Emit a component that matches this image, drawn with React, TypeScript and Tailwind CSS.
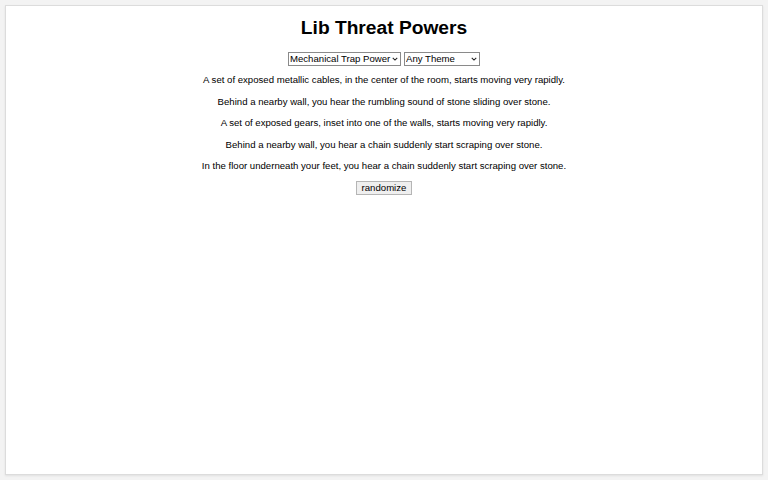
import { useState } from 'react';

const lines = [
  'A set of exposed metallic cables, in the center of the room, starts moving very rapidly.',
  'Behind a nearby wall, you hear the rumbling sound of stone sliding over stone.',
  'A set of exposed gears, inset into one of the walls, starts moving very rapidly.',
  'Behind a nearby wall, you hear a chain suddenly start scraping over stone.',
  'In the floor underneath your feet, you hear a chain suddenly start scraping over stone.',
];

function Picker({
  value,
  onChange,
  options,
  width,
}: {
  value: string;
  onChange: (v: string) => void;
  options: [string, string][];
  width: string;
}) {
  return (
    <div className={`relative h-[14px] ${width}`}>
      <select
        value={value}
        onChange={(e) => onChange(e.target.value)}
        className="block h-[14px] w-full appearance-none border border-[#8a8a8a] bg-white pr-[9px] pl-[1px] text-[9.6px] leading-[12px] text-black"
      >
        {options.map(([v, label]) => (
          <option key={v} value={v}>
            {label}
          </option>
        ))}
      </select>
      <svg
        viewBox="0 0 8 5"
        className="pointer-events-none absolute top-[5px] right-[3px] h-[4px] w-[6px]"
      >
        <path d="M1 1l3 3 3-3" fill="none" stroke="#222" strokeWidth="1.4" />
      </svg>
    </div>
  );
}

export default function App() {
  const [power, setPower] = useState('mechanical');
  const [theme, setTheme] = useState('any');

  return (
    <div className="min-h-[480px] bg-[#f3f3f3] p-[5px] font-['Liberation_Sans',Arial,sans-serif] text-black">
      <div className="h-[470px] border border-[#dcdcdc] bg-white shadow-[0_1px_2px_rgba(0,0,0,0.08)]">
        <h1 className="mt-[11px] text-center text-[19.2px] leading-[22px] font-bold">
          Lib Threat Powers
        </h1>

        {/* power + theme pickers */}
        <div className="mt-[13px] flex items-start justify-center gap-[3px]">
          <Picker
            value={power}
            onChange={setPower}
            width="w-[113px]"
            options={[
              ['mechanical', 'Mechanical Trap Power'],
              ['magical', 'Magical Trap Power'],
            ]}
          />
          <Picker
            value={theme}
            onChange={setTheme}
            width="w-[76px]"
            options={[
              ['any', 'Any Theme'],
              ['dungeon', 'Dungeon'],
            ]}
          />
        </div>

        <div className="mt-[8px] flex flex-col gap-[9.5px] text-center text-[9.6px] leading-[12px]">
          {lines.map((line, i) => (
            <p key={i}>{line}</p>
          ))}
        </div>

        <div className="mt-[9px] flex justify-center">
          <button className="h-[14px] border border-[#b5b5b5] bg-[#efefef] px-[5px] text-[9.6px] leading-[12px]">
            randomize
          </button>
        </div>
      </div>
    </div>
  );
}
